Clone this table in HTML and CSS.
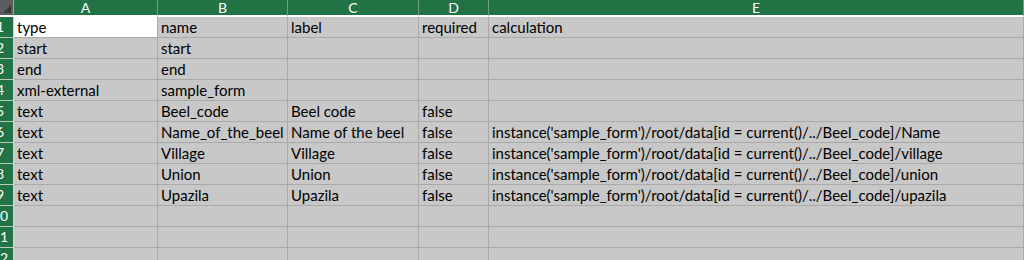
FILE: index.html
```html
<!DOCTYPE html>
<html lang="en">
<head>
  <meta charset="UTF-8">
  <title>survey.xlsx</title>
  <link rel="stylesheet" href="styles.css">
</head>
<body>
  <div class="sheet">
    <!-- column headers -->
    <div class="corner"></div>
    <div class="col-head">A</div>
    <div class="col-head">B</div>
    <div class="col-head">C</div>
    <div class="col-head">D</div>
    <div class="col-head">E</div>

    <div class="row-head"><span>1</span></div>
    <div class="cell active">type</div>
    <div class="cell">name</div>
    <div class="cell">label</div>
    <div class="cell">required</div>
    <div class="cell">calculation</div>

    <div class="row-head"><span>2</span></div>
    <div class="cell">start</div>
    <div class="cell">start</div>
    <div class="cell"></div>
    <div class="cell"></div>
    <div class="cell"></div>

    <div class="row-head"><span>3</span></div>
    <div class="cell">end</div>
    <div class="cell">end</div>
    <div class="cell"></div>
    <div class="cell"></div>
    <div class="cell"></div>

    <div class="row-head"><span>4</span></div>
    <div class="cell">xml-external</div>
    <div class="cell">sample_form</div>
    <div class="cell"></div>
    <div class="cell"></div>
    <div class="cell"></div>

    <div class="row-head"><span>5</span></div>
    <div class="cell">text</div>
    <div class="cell">Beel_code</div>
    <div class="cell">Beel code</div>
    <div class="cell">false</div>
    <div class="cell"></div>

    <div class="row-head"><span>6</span></div>
    <div class="cell">text</div>
    <div class="cell">Name_of_the_beel</div>
    <div class="cell">Name of the beel</div>
    <div class="cell">false</div>
    <div class="cell">instance('sample_form')/root/data[id = current()/../Beel_code]/Name</div>

    <div class="row-head"><span>7</span></div>
    <div class="cell">text</div>
    <div class="cell">Village</div>
    <div class="cell">Village</div>
    <div class="cell">false</div>
    <div class="cell">instance('sample_form')/root/data[id = current()/../Beel_code]/village</div>

    <div class="row-head"><span>8</span></div>
    <div class="cell">text</div>
    <div class="cell">Union</div>
    <div class="cell">Union</div>
    <div class="cell">false</div>
    <div class="cell">instance('sample_form')/root/data[id = current()/../Beel_code]/union</div>

    <div class="row-head"><span>9</span></div>
    <div class="cell">text</div>
    <div class="cell">Upazila</div>
    <div class="cell">Upazila</div>
    <div class="cell">false</div>
    <div class="cell">instance('sample_form')/root/data[id = current()/../Beel_code]/upazila</div>

    <div class="row-head"><span>10</span></div>
    <div class="cell"></div>
    <div class="cell"></div>
    <div class="cell"></div>
    <div class="cell"></div>
    <div class="cell"></div>

    <div class="row-head"><span>11</span></div>
    <div class="cell"></div>
    <div class="cell"></div>
    <div class="cell"></div>
    <div class="cell"></div>
    <div class="cell"></div>

    <div class="row-head"><span>12</span></div>
    <div class="cell"></div>
    <div class="cell"></div>
    <div class="cell"></div>
    <div class="cell"></div>
    <div class="cell"></div>
  </div>
</body>
</html>
```

FILE: styles.css
```css
body {
  margin: 0;
  background: #c8c8c8;
  font-family: 'Lato', 'Open Sans', sans-serif;
  overflow: hidden;
}
.sheet {
  display: grid;
  grid-template-columns: 14px 144px 130px 131px 70px 1fr;
  grid-template-rows: 17px;
  grid-auto-rows: 21px;
}
/* every grid box includes its own right/bottom line */
.sheet > div {
  box-sizing: border-box;
  white-space: nowrap;
  overflow: hidden;
}
.corner {
  background: #5c5c5c;
  border-right: 1px solid #8fb39c;
  border-bottom: 2px solid #fff;
  position: relative;
}
.corner::after { /* select-all triangle */
  content: '';
  position: absolute;
  right: 2px;
  bottom: 2px;
  border-left: 8px solid transparent;
  border-bottom: 8px solid #3a3a3a;
}
.col-head {
  background: #217346;
  color: #fff;
  font-size: 14px;
  line-height: 15px;
  text-align: center;
  border-right: 1px solid #6fa283;
  border-bottom: 2px solid #fff;
}
.row-head {
  background: #217346;
  color: #fff;
  font-size: 14px;
  line-height: 20px;
  border-right: 1px solid #d4d4d4;
  border-bottom: 1px solid #b9c9be;
}
.row-head span {
  display: block;
  width: 28px;
  margin-left: -14px;
  text-align: center;
}
.cell {
  background: #c8c8c8;
  color: #000;
  font-size: 15px;
  line-height: 20px;
  padding-left: 3px;
  border-right: 1px solid #a9a9a9;
  border-bottom: 1px solid #a9a9a9;
}
.cell.active {
  background: #fff;
}
```
